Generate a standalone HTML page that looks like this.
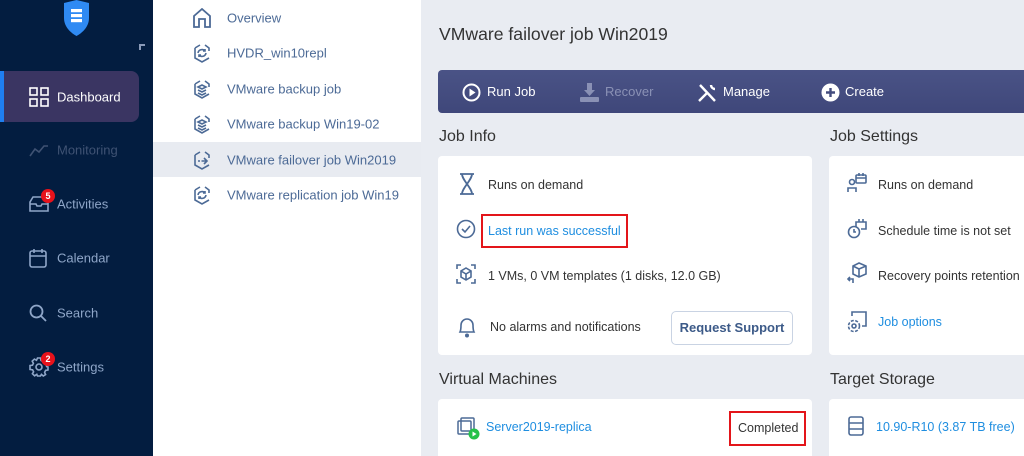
<!DOCTYPE html>
<html style="width:1024px;height:456px;overflow:hidden"><head><meta charset="utf-8"><style>
*{margin:0;padding:0;box-sizing:border-box}
body{width:1024px;height:456px;overflow:hidden;font-family:"Liberation Sans",sans-serif;background:#e9ecf2;position:relative}
.abs{position:absolute}
#side{left:0;top:0;width:153px;height:456px;background:#031d40}
.nav{position:absolute;left:0;width:139px;height:50px;color:#8fa6c8;font-size:13px}
.nav span{position:absolute;left:57px;top:50%;transform:translateY(-50%)}
.nav svg{position:absolute;left:29px;top:50%;transform:translateY(-50%)}
.badge{position:absolute;width:14px;height:14px;border-radius:7px;background:#e8121b;color:#fff;font-size:9px;font-weight:bold;text-align:center;line-height:14px}
#mid{left:153px;top:0;width:268px;height:456px;background:#fff}
.mi{position:absolute;left:0;width:268px;height:35px;color:#4c6a96;font-size:13px}
.mi span{position:absolute;left:74px;top:50%;transform:translateY(-50%)}
.mi svg{position:absolute;left:39px;top:50%;transform:translateY(-50%)}
.card{position:absolute;background:#fff;border-radius:4px}
.h{position:absolute;font-size:16px;color:#333}
.row{position:absolute;font-size:12.5px;color:#333}
.tb{position:absolute;top:0;height:43px;line-height:43px;color:#fff;font-size:13px}
.tb svg{position:absolute;top:13px}
.link{color:#1f8ee0}
</style></head><body>
<div id="side" class="abs">
  <svg class="abs" style="left:62px;top:0" width="29" height="37" viewBox="0 0 29 37"><path d="M2 3 L14.5 0 L27 3 V18 C27 27 20 33 14.5 36 C9 33 2 27 2 18Z" fill="#2f8af3"/><rect x="9" y="9" width="11" height="3.2" fill="#fff"/><rect x="9" y="14" width="11" height="3.2" fill="#fff"/><rect x="9" y="19" width="11" height="3.2" fill="#fff"/></svg>
  <svg class="abs" style="left:139px;top:44px" width="7" height="7"><path d="M1 6V1H6" stroke="#8a9ab8" stroke-width="2" fill="none"/></svg>
  <div class="nav" style="top:71px;height:51px;background:#3a3562;border-radius:0 8px 8px 0;color:#fff"><div class="abs" style="left:0;top:0;width:4px;height:51px;background:#1f7ff0"></div>
    <svg width="20" height="20" viewBox="0 0 20 20" fill="none" stroke="#fff" stroke-width="1.6"><rect x="1" y="1" width="7" height="7"/><rect x="12" y="1" width="7" height="7"/><rect x="1" y="12" width="7" height="7"/><rect x="12" y="12" width="7" height="7"/></svg><span>Dashboard</span></div>
  <div class="nav" style="top:125px;color:#3f5273"><svg width="20" height="14" viewBox="0 0 20 14" fill="none" stroke="#3f5273" stroke-width="1.6"><path d="M1 13L6 6L10 9L15 3L19 3"/></svg><span>Monitoring</span></div>
  <div class="nav" style="top:179px"><svg width="20" height="18" viewBox="0 0 20 18" fill="none" stroke="#8fa6c8" stroke-width="1.6"><path d="M1 7L4 2H16L19 7V16H1Z M1 9H7L8 11H12L13 9H19"/></svg><span>Activities</span><div class="badge" style="left:41px;top:10px">5</div></div>
  <div class="nav" style="top:233px"><svg width="18" height="20" viewBox="0 0 18 20" fill="none" stroke="#8fa6c8" stroke-width="1.6"><rect x="1" y="3" width="16" height="16" rx="2"/><path d="M1 8H17M5 1V5M13 1V5"/></svg><span>Calendar</span></div>
  <div class="nav" style="top:288px"><svg width="18" height="18" viewBox="0 0 18 18" fill="none" stroke="#8fa6c8" stroke-width="1.8"><circle cx="7.5" cy="7.5" r="6"/><path d="M12 12L17 17"/></svg><span>Search</span></div>
  <div class="nav" style="top:342px"><svg width="20" height="20" viewBox="0 0 20 20" fill="none" stroke="#8fa6c8" stroke-width="1.6"><circle cx="10" cy="10" r="3"/><path d="M8.5 1H11.5L12 3.5L14 4.5L16.3 3.3L18.4 5.5L17 7.6L17.7 9.6L19 10V13L16.6 13.4L15.6 15.4L16.6 17.6L14.3 19L12.4 17.4L11.5 19H8.5L7.8 17.3L5.6 18.8L3.4 16.7L4.6 14.8L3.6 12.8L1 12.4V8.6L3.5 8.2L4.4 6.3L3.2 4.2L5.4 2.1L7.5 3.3Z"/></svg><span>Settings</span><div class="badge" style="left:41px;top:10px">2</div></div>
</div>
<div id="mid" class="abs">
  <div class="mi" style="top:0"><svg width="20" height="20" viewBox="0 0 20 20" fill="none" stroke="#4c6a96" stroke-width="1.8"><path d="M2 19V8L10 1L18 8V19H13V11H7V19Z"/></svg><span>Overview</span></div>
  <div class="mi" style="top:35px"><svg width="20" height="20" viewBox="0 0 20 20" fill="none" stroke="#4c6a96" stroke-width="1.6"><path d="M3 5V15L10 19 17 15M3 5L8 2M13 2L17 5V8"/><path d="M6 10A4 4 0 0 1 13 8M14 10A4 4 0 0 1 7 12M13 6V8H11M7 14V12H9"/></svg><span>HVDR_win10repl</span></div>
  <div class="mi" style="top:71px"><svg width="20" height="20" viewBox="0 0 20 20" fill="none" stroke="#4c6a96" stroke-width="1.6"><path d="M3 5V15L10 19 17 15M3 5L8 2M13 2L17 5V8"/><path d="M6 8L10 6L14 8L10 10Z M6 11L10 13L14 11M6 14L10 16L14 14"/></svg><span>VMware backup job</span></div>
  <div class="mi" style="top:106px"><svg width="20" height="20" viewBox="0 0 20 20" fill="none" stroke="#4c6a96" stroke-width="1.6"><path d="M3 5V15L10 19 17 15M3 5L8 2M13 2L17 5V8"/><path d="M6 8L10 6L14 8L10 10Z M6 11L10 13L14 11M6 14L10 16L14 14"/></svg><span>VMware backup Win19-02</span></div>
  <div class="mi" style="top:142px;background:#e8ebf1"><svg width="20" height="20" viewBox="0 0 20 20" fill="none" stroke="#4c6a96" stroke-width="1.6"><path d="M3 5V15L10 19 17 15M3 5L8 2M13 2L17 5V8"/><path d="M6 11H8M9.5 11H15M12 8L15 11L12 14"/></svg><span>VMware failover job Win2019</span></div>
  <div class="mi" style="top:177px"><svg width="20" height="20" viewBox="0 0 20 20" fill="none" stroke="#4c6a96" stroke-width="1.6"><path d="M3 5V15L10 19 17 15M3 5L8 2M13 2L17 5V8"/><path d="M6 10A4 4 0 0 1 13 8M14 10A4 4 0 0 1 7 12M13 6V8H11M7 14V12H9"/></svg><span>VMware replication job Win19</span></div>
</div>
<div class="abs" style="left:439px;top:24px;font-size:17.6px;color:#333">VMware failover job Win2019</div>
<div class="abs" style="left:438px;top:70px;width:600px;height:43px;background:linear-gradient(#4a5386,#3f477a);border-radius:4px">
  <div class="tb" style="left:24px"><svg style="left:0" width="19" height="19" viewBox="0 0 19 19"><circle cx="9.5" cy="9.5" r="8" fill="none" stroke="#fff" stroke-width="2"/><path d="M7.5 5.5V13.5L13.5 9.5Z" fill="#fff"/></svg><span style="margin-left:25px">Run Job</span></div>
  <div class="tb" style="left:142px;color:#8a91b5"><svg style="left:0" width="19" height="19" viewBox="0 0 19 19" fill="#8a91b5"><path d="M7 0H12V7H15L9.5 13L4 7H7Z"/><rect x="0" y="14" width="19" height="5" rx="1"/></svg><span style="margin-left:25px">Recover</span></div>
  <div class="tb" style="left:259px"><svg style="left:0" width="20" height="20" viewBox="0 0 20 20" fill="none" stroke="#fff" stroke-width="2.4"><path d="M2 18L11 9M3 2L18 18M14 2A4 4 0 0 0 18 6"/></svg><span style="margin-left:26px">Manage</span></div>
  <div class="tb" style="left:383px"><svg style="left:0" width="19" height="19" viewBox="0 0 19 19"><circle cx="9.5" cy="9.5" r="9" fill="#fff"/><path d="M9.5 5V14M5 9.5H14" stroke="#434c7e" stroke-width="2.4"/></svg><span style="margin-left:24px">Create</span></div>
</div>
<div class="h" style="left:439px;top:128px">Job Info</div>
<div class="h" style="left:830px;top:128px">Job Settings</div>
<div class="card" style="left:438px;top:156px;width:374px;height:199px">
  <svg class="abs" style="left:20px;top:17px" width="18" height="22" viewBox="0 0 18 22" fill="none" stroke="#4c6a96" stroke-width="1.8"><path d="M2 1H16M2 21H16M4 1C4 7 14 15 14 21M14 1C14 7 4 15 4 21"/></svg>
  <div class="row" style="left:50px;top:22px">Runs on demand</div>
  <svg class="abs" style="left:18px;top:63px" width="20" height="20" viewBox="0 0 20 20" fill="none" stroke="#4c6a96" stroke-width="1.6"><circle cx="10" cy="10" r="8.5"/><path d="M6 10L9 13L14 7"/></svg>
  <div class="abs" style="left:43px;top:58px;width:147px;height:34px;border:2px solid #e3151a"></div>
  <div class="row link" style="left:50px;top:68px">Last run was successful</div>
  <svg class="abs" style="left:18px;top:108px" width="20" height="20" viewBox="0 0 20 20" fill="none" stroke="#4c6a96" stroke-width="1.6"><path d="M1 5V1H5M15 1H19V5M19 15V19H15M5 19H1V15"/><path d="M10 4L15 7V13L10 16L5 13V7Z M5 7L10 10L15 7M10 10V16"/></svg>
  <div class="row" style="left:50px;top:113px">1 VMs, 0 VM templates (1 disks, 12.0 GB)</div>
  <svg class="abs" style="left:20px;top:160px" width="18" height="22" viewBox="0 0 18 22" fill="none" stroke="#4c6a96" stroke-width="1.6"><path d="M2 16C3 14 3 12 3 9A6 6 0 0 1 15 9C15 12 15 14 16 16Z"/><circle cx="9" cy="19.5" r="1.2" fill="#4c6a96"/></svg>
  <div class="row" style="left:52px;top:164px">No alarms and notifications</div>
  <div class="abs" style="left:233px;top:155px;width:122px;height:34px;border:1px solid #c9d3e3;border-radius:5px;text-align:center;line-height:32px;font-size:13px;font-weight:bold;color:#3c5a88">Request Support</div>
</div>
<div class="card" style="left:829px;top:156px;width:200px;height:199px">
  <svg class="abs" style="left:18px;top:16px" width="20" height="21" viewBox="0 0 20 21" fill="none" stroke="#4c6a96" stroke-width="1.6"><rect x="9" y="3" width="10" height="8" rx="1"/><path d="M12 1V4M16 1V4M9 6H19"/><circle cx="5" cy="10" r="2.5"/><path d="M1 20V16H9V20"/></svg>
  <div class="row" style="left:49px;top:22px">Runs on demand</div>
  <svg class="abs" style="left:18px;top:62px" width="20" height="21" viewBox="0 0 20 21" fill="none" stroke="#4c6a96" stroke-width="1.6"><path d="M9 9V4H19V11H14M12 1V4M16 1V4"/><circle cx="7" cy="14" r="5.5"/><path d="M7 11V14H9"/></svg>
  <div class="row" style="left:49px;top:68px">Schedule time is not set</div>
  <svg class="abs" style="left:18px;top:106px" width="20" height="22" viewBox="0 0 20 22" fill="none" stroke="#4c6a96" stroke-width="1.6"><path d="M12 1L19 4V12L12 15L6 12V4Z M6 4L12 7L19 4M12 7V15"/><path d="M6 21V17H1M3 15L1 17L3 19"/></svg>
  <div class="row" style="left:49px;top:113px">Recovery points retention</div>
  <svg class="abs" style="left:18px;top:155px" width="20" height="22" viewBox="0 0 20 22" fill="none" stroke="#4c6a96" stroke-width="1.6"><path d="M5 5V1H19V15H15"/><circle cx="7" cy="15" r="2"/><circle cx="7" cy="15" r="5.5" stroke-dasharray="3 1.5"/></svg>
  <div class="row link" style="left:49px;top:159px">Job options</div>
</div>
<div class="h" style="left:439px;top:371px">Virtual Machines</div>
<div class="h" style="left:830px;top:371px">Target Storage</div>
<div class="card" style="left:438px;top:399px;width:374px;height:57px;border-radius:4px 4px 0 0">
  <svg class="abs" style="left:19px;top:17px" width="24" height="24" viewBox="0 0 24 24"><g fill="none" stroke="#4c6a96" stroke-width="1.5"><rect x="1" y="5" width="13" height="13" rx="1"/><rect x="4" y="2" width="13" height="13" rx="1"/></g><circle cx="17" cy="18" r="5.5" fill="#25c14a"/><path d="M15.5 15.5V20.5L19.5 18Z" fill="#fff"/></svg>
  <div class="row link" style="left:48px;top:21px">Server2019-replica</div>
  <div class="abs" style="left:291px;top:12px;width:77px;height:35px;border:2px solid #e3151a"></div>
  <div class="row" style="left:300px;top:22px">Completed</div>
</div>
<div class="card" style="left:829px;top:399px;width:195px;height:57px;border-radius:4px 0 0 0">
  <svg class="abs" style="left:19px;top:17px" width="16" height="20" viewBox="0 0 16 20" fill="none" stroke="#4c6a96" stroke-width="1.6"><rect x="1" y="1" width="14" height="18" rx="2"/><path d="M1 7H15M1 13H15"/></svg>
  <div class="row link" style="left:47px;top:21px">10.90-R10 (3.87 TB free)</div>
</div>
</body></html>
